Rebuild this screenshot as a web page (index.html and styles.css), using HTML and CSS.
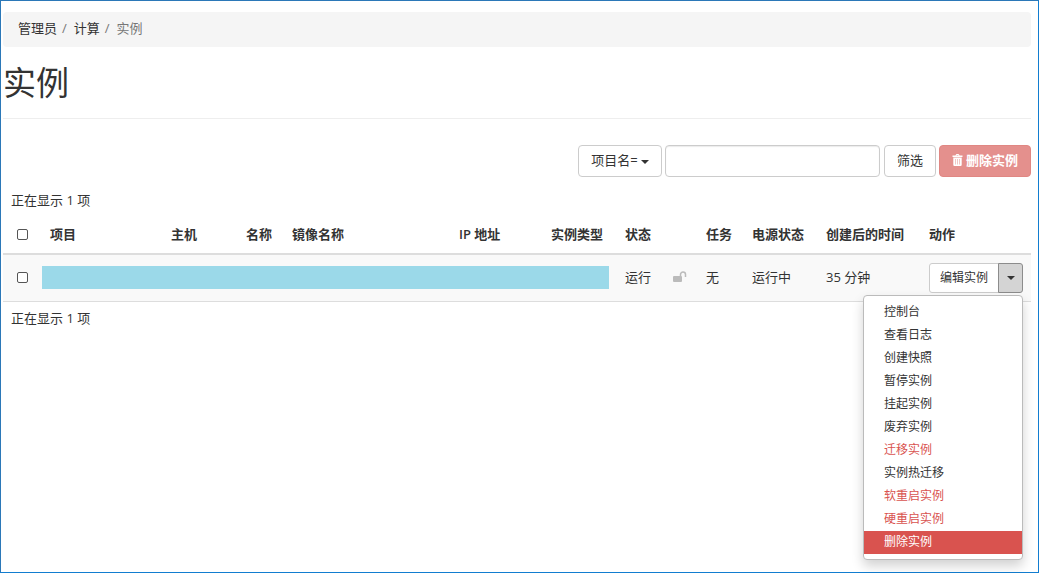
FILE: index.html
```html
<!DOCTYPE html>
<html lang="zh-CN">
<head>
    <meta charset="UTF-8">
    <meta name="viewport" content="width=device-width, initial-scale=1.0">
    <title>实例</title>
    <link rel="stylesheet" href="styles.css">
</head>
<body>
    <div class="page">
        <ol class="breadcrumb">
            <li><a href="#">管理员</a></li>
            <li><a href="#">计算</a></li>
            <li class="active">实例</li>
        </ol>

        <h1 class="page-header">实例</h1>

        <div class="table-actions">
            <button type="button" class="btn">项目名= <span class="caret"></span></button>
            <input type="text" class="search" aria-label="项目名">
            <button type="button" class="btn btn-filter">筛选</button>
            <button type="button" class="btn btn-danger" disabled>
                <svg class="icon-trash" viewBox="0 0 11 12" aria-hidden="true">
                    <path fill-rule="evenodd" d="M3.500 1.500 4 .5Q4.200 0 4.700 0H6.300Q6.800 0 7 .5L7.500 1.500H10.500V3H.5V1.500ZM4.500 1.500H6.500L6.200 .900H4.800ZM1.300 3.500H9.700V10.800Q9.700 12 8.600 12H2.400Q1.300 12 1.300 10.800ZM3.200 5V10.500H3.700V5ZM5.250 5V10.500H5.750V5ZM7.300 5V10.500H7.800V5Z"/>
                </svg>
                删除实例
            </button>
        </div>

        <div class="table-count">正在显示 1 项</div>
        <table class="table">
            <colgroup>
                <col class="col-check">
                <col class="col-project">
                <col class="col-host">
                <col class="col-name">
                <col class="col-image">
                <col class="col-ip">
                <col class="col-flavor">
                <col class="col-status">
                <col class="col-lock">
                <col class="col-task">
                <col class="col-power">
                <col class="col-age">
                <col class="col-action">
            </colgroup>
            <thead>
                <tr>
                    <th class="check"><input type="checkbox" aria-label="全选"></th>
                    <th>项目</th>
                    <th>主机</th>
                    <th>名称</th>
                    <th>镜像名称</th>
                    <th>IP 地址</th>
                    <th>实例类型</th>
                    <th>状态</th>
                    <th></th>
                    <th>任务</th>
                    <th>电源状态</th>
                    <th>创建后的时间</th>
                    <th>动作</th>
                </tr>
            </thead>
            <tbody>
                <tr>
                    <td class="check"><input type="checkbox" aria-label="选择实例"></td>
                    <td class="masked" colspan="6"><div class="mask"></div></td>
                    <td>运行</td>
                    <td class="lock">
                        <svg class="icon-lock" viewBox="0 0 14 12" aria-hidden="true">
                            <rect x="0" y="5" width="9" height="6" rx="1" fill="#bbb"/>
                            <path d="M7.500 5.500V3.500A2.500 2.500 0 0 1 12.500 3.500V6" fill="none" stroke="#bbb" stroke-width="1.500"/>
                        </svg>
                    </td>
                    <td>无</td>
                    <td>运行中</td>
                    <td>35 分钟</td>
                    <td class="actions">
                        <div class="btn-group">
                            <button type="button" class="btn btn-sm">编辑实例</button>
                            <button type="button" class="btn btn-sm btn-toggle" aria-label="更多动作" aria-expanded="true"><span class="caret"></span></button>
                            <ul class="dropdown-menu">
                                <li><a href="#">控制台</a></li>
                                <li><a href="#">查看日志</a></li>
                                <li><a href="#">创建快照</a></li>
                                <li><a href="#">暂停实例</a></li>
                                <li><a href="#">挂起实例</a></li>
                                <li><a href="#">废弃实例</a></li>
                                <li><a href="#" class="danger">迁移实例</a></li>
                                <li><a href="#">实例热迁移</a></li>
                                <li><a href="#" class="danger">软重启实例</a></li>
                                <li><a href="#" class="danger">硬重启实例</a></li>
                                <li><a href="#" class="danger selected">删除实例</a></li>
                            </ul>
                        </div>
                    </td>
                </tr>
            </tbody>
        </table>
        <div class="table-count">正在显示 1 项</div>
    </div>
</body>
</html>
```

FILE: styles.css
```css
* {
    box-sizing: border-box;
}
body {
    margin: 0;
    font-family: "Open Sans", "Noto Sans CJK SC", sans-serif;
    font-size: 13px;
    line-height: 18px;
    color: #333;
    background-color: #fff;
}
a {
    color: #333;
    text-decoration: none;
}
.page {
    min-height: 100vh;
    padding: 11px 7px 0 2px;
    border: 1px solid #127dd0;
    border-top-color: #2b78b8;
    border-left-color: #2b78b8;
}
.breadcrumb {
    display: flex;
    margin: 0;
    padding: 7px 15px 10px;
    list-style: none;
    background-color: #f5f5f5;
    border-radius: 4px;
}
.breadcrumb li + li::before {
    content: "/";
    padding: 0 7px 0 5px;
    color: #777;
}
.breadcrumb .active {
    color: #777;
}
.page-header {
    margin: 0 0 26px;
    padding: 16px 0 15px;
    font-size: 33px;
    font-weight: 400;
    line-height: 40px;
    border-bottom: 1px solid #eee;
}
.table-actions {
    display: flex;
    justify-content: flex-end;
    gap: 3px;
    margin-bottom: 14px;
}
.btn {
    height: 32px;
    padding: 0 12px 2px;
    font-family: inherit;
    font-size: 13px;
    line-height: 18px;
    color: #333;
    background-color: #fff;
    border: 1px solid #ccc;
    border-radius: 4px;
    white-space: nowrap;
    cursor: pointer;
}
.btn-filter {
    margin-left: 1px;
}
.btn-danger {
    display: flex;
    align-items: center;
    gap: 3px;
    color: #fff;
    font-weight: 600;
    background-color: #e4908d;
    border-color: #e08783;
    cursor: not-allowed;
}
.icon-trash {
    width: 11px;
    height: 12px;
    fill: #fff;
}
.search {
    width: 215px;
    height: 32px;
    padding: 6px 12px;
    font: inherit;
    border: 1px solid #ccc;
    border-radius: 4px;
    box-shadow: inset 0 1px 1px rgba(0, 0, 0, 0.08);
}
.caret {
    display: inline-block;
    vertical-align: middle;
    border-top: 4px solid #333;
    border-left: 4px solid transparent;
    border-right: 4px solid transparent;
}
.table-count {
    padding: 0 8px;
}
.table {
    width: 100%;
    margin-bottom: 7px;
    table-layout: fixed;
    border-collapse: separate;
    border-spacing: 0;
}
.col-check { width: 39px; }
.col-project { width: 121px; }
.col-host { width: 75px; }
.col-name { width: 46px; }
.col-image { width: 167px; }
.col-ip { width: 92px; }
.col-flavor { width: 74px; }
.col-status { width: 45px; }
.col-lock { width: 36px; }
.col-task { width: 46px; }
.col-power { width: 74px; }
.col-age { width: 103px; }
.col-action { width: 110px; }
th,
td {
    padding: 7px 8px 9px;
    text-align: left;
    vertical-align: middle;
    white-space: nowrap;
}
th {
    height: 46px;
    padding: 16px 8px 10px;
    font-weight: 600;
    border-bottom: 2px solid #ddd;
}
td {
    height: 47px;
    background-color: #f9f9f9;
    border-bottom: 1px solid #ddd;
}
td.actions {
    padding: 8px;
}
.check {
    padding-left: 14px;
    padding-right: 0;
}
.check input {
    appearance: none;
    display: block;
    width: 11px;
    height: 11px;
    margin: 0;
    background-color: #fff;
    border: 1px solid #555;
    border-radius: 2px;
}
td.masked {
    padding-left: 0;
}
.mask {
    height: 23px;
    background-color: #9bd9e9;
}
.icon-lock {
    display: block;
    width: 14px;
    height: 12px;
    margin-left: 3px;
}
.btn-group {
    position: relative;
    display: flex;
}
.btn-sm {
    flex: 1;
    height: 30px;
    padding: 0 10px;
    font-size: 12px;
    border-radius: 3px 0 0 3px;
}
.btn-toggle {
    display: flex;
    flex: none;
    align-items: center;
    justify-content: center;
    width: 25px;
    margin-left: -1px;
    padding: 0;
    background-color: #d4d4d4;
    border-color: #8c8c8c;
    border-radius: 0 3px 3px 0;
}
.dropdown-menu {
    position: absolute;
    top: 100%;
    right: 0;
    z-index: 10;
    width: 160px;
    margin: 2px 0 0;
    padding: 5px 0;
    list-style: none;
    font-size: 12px;
    background-color: #fff;
    border: 1px solid #bbb;
    border-radius: 4px;
    box-shadow: 0 6px 12px rgba(0, 0, 0, 0.18);
}
.dropdown-menu a {
    display: block;
    height: 23px;
    padding: 0 20px;
    line-height: 22px;
}
.dropdown-menu .danger {
    color: #d9534f;
}
.dropdown-menu .selected {
    color: #fff;
    background-color: #d9534f;
}
```
